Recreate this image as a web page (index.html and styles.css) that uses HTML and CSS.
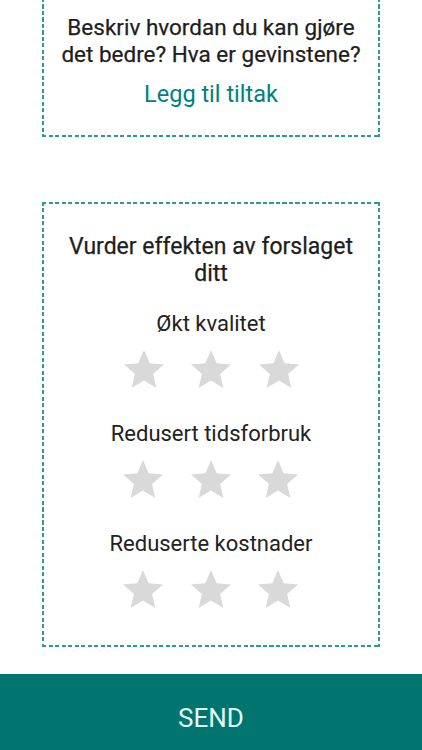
FILE: index.html
```html
<!DOCTYPE html>
<html lang="no">
<head>
<meta charset="utf-8">
<title>Tiltak</title>
<link rel="stylesheet" href="styles.css">
</head>
<body>
<div class="screen">
  <main class="content">
    <section class="card card-top">
      <p class="prompt">Beskriv hvordan du kan gjøre det bedre? Hva er gevinstene?</p>
      <a class="link" href="#">Legg til tiltak</a>
    </section>

    <section class="card card-rate">
      <h2 class="title">Vurder effekten av forslaget ditt</h2>

      <div class="group">
        <div class="label">Økt kvalitet</div>
        <div class="stars">
          <svg class="star" viewBox="0 0 24 24"><path d="M12 17.27L18.18 21l-1.64-7.03L22 9.24l-7.19-.61L12 2 9.19 8.63 2 9.24l5.46 4.73L5.82 21z"/></svg>
          <svg class="star" viewBox="0 0 24 24"><path d="M12 17.27L18.18 21l-1.64-7.03L22 9.24l-7.19-.61L12 2 9.19 8.63 2 9.24l5.46 4.73L5.82 21z"/></svg>
          <svg class="star" viewBox="0 0 24 24"><path d="M12 17.27L18.18 21l-1.64-7.03L22 9.24l-7.19-.61L12 2 9.19 8.63 2 9.24l5.46 4.73L5.82 21z"/></svg>
        </div>
      </div>

      <div class="group">
        <div class="label">Redusert tidsforbruk</div>
        <div class="stars">
          <svg class="star" viewBox="0 0 24 24"><path d="M12 17.27L18.18 21l-1.64-7.03L22 9.24l-7.19-.61L12 2 9.19 8.63 2 9.24l5.46 4.73L5.82 21z"/></svg>
          <svg class="star" viewBox="0 0 24 24"><path d="M12 17.27L18.18 21l-1.64-7.03L22 9.24l-7.19-.61L12 2 9.19 8.63 2 9.24l5.46 4.73L5.82 21z"/></svg>
          <svg class="star" viewBox="0 0 24 24"><path d="M12 17.27L18.18 21l-1.64-7.03L22 9.24l-7.19-.61L12 2 9.19 8.63 2 9.24l5.46 4.73L5.82 21z"/></svg>
        </div>
      </div>

      <div class="group">
        <div class="label">Reduserte kostnader</div>
        <div class="stars">
          <svg class="star" viewBox="0 0 24 24"><path d="M12 17.27L18.18 21l-1.64-7.03L22 9.24l-7.19-.61L12 2 9.19 8.63 2 9.24l5.46 4.73L5.82 21z"/></svg>
          <svg class="star" viewBox="0 0 24 24"><path d="M12 17.27L18.18 21l-1.64-7.03L22 9.24l-7.19-.61L12 2 9.19 8.63 2 9.24l5.46 4.73L5.82 21z"/></svg>
          <svg class="star" viewBox="0 0 24 24"><path d="M12 17.27L18.18 21l-1.64-7.03L22 9.24l-7.19-.61L12 2 9.19 8.63 2 9.24l5.46 4.73L5.82 21z"/></svg>
        </div>
      </div>
    </section>
  </main>
  <button class="send" type="button">SEND</button>
</div>
</body>
</html>
```

FILE: styles.css
```css
html, body {
  margin: 0;
  padding: 0;
  background: #ffffff;
}

body {
  font-family: Roboto, "Noto Sans", "Liberation Sans", sans-serif;
  color: #212121;
  overflow: hidden;
}

.screen {
  width: 422px;
  height: 750px;
  display: flex;
  flex-direction: column;
  overflow: hidden;
}

.content {
  flex: 1;
  padding: 0 42px;
  display: flex;
  flex-direction: column;
  min-height: 0;
}

.card {
  --dash: #2b9c93;
  width: 338px;
  box-sizing: border-box;
  display: flex;
  flex-direction: column;
  align-items: center;
  text-align: center;
  background:
    repeating-linear-gradient(90deg, var(--dash) 0 4px, transparent 4px 6.5px) left top / 100% 2px no-repeat,
    repeating-linear-gradient(90deg, var(--dash) 0 4px, transparent 4px 6.5px) left bottom / 100% 2px no-repeat,
    repeating-linear-gradient(180deg, var(--dash) 0 4px, transparent 4px 6.5px) left top / 2px 100% no-repeat,
    repeating-linear-gradient(180deg, var(--dash) 0 4px, transparent 4px 6.5px) right top / 2px 100% no-repeat;
}

.card-top {
  margin-top: -15px;
  padding: 29px 14px 29px;
}

.prompt {
  margin: 0;
  font-size: 22.5px;
  line-height: 27px;
  font-weight: 400;
  color: #1e1e1e;
  -webkit-text-stroke: 0.25px #1e1e1e;
}

.link {
  margin-top: 12px;
  font-size: 23.5px;
  line-height: 28px;
  color: #00827a;
  text-decoration: none;
}

.card-rate {
  margin-top: 65px;
  padding: 31px 14px 33px;
}

.title {
  margin: 0;
  font-size: 23px;
  line-height: 27px;
  font-weight: 400;
  color: #1e1e1e;
  -webkit-text-stroke: 0.25px #1e1e1e;
}

.group {
  display: flex;
  flex-direction: column;
  align-items: center;
  margin-top: 23px;
}

.group + .group {
  margin-top: 26px;
}

.label {
  font-size: 22px;
  line-height: 28px;
  color: #222222;
}

.stars {
  margin-top: 8px;
  display: flex;
  gap: 19.5px;
}

.star {
  width: 48px;
  height: 48px;
  fill: #d9d9d9;
  display: block;
}

.send {
  flex: none;
  height: 76px;
  width: 100%;
  border: none;
  margin: 0;
  padding: 12px 0 0;
  background: #007570;
  color: #e3f6f3;
  font-family: Roboto, "Noto Sans", "Liberation Sans", sans-serif;
  font-size: 26px;
  cursor: pointer;
}
```
